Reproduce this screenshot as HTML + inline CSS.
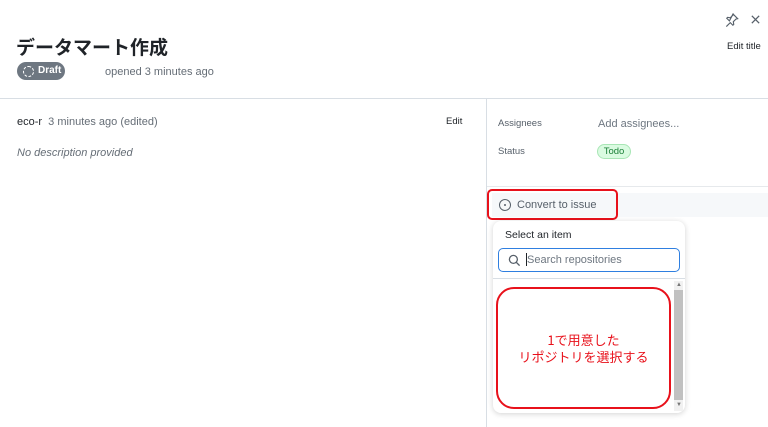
<!DOCTYPE html>
<html><head><meta charset="utf-8"><style>
*{box-sizing:border-box;margin:0;padding:0}
body{width:768px;height:427px;overflow:hidden;background:#fff;font-family:"Liberation Sans","Noto Sans CJK JP",sans-serif;color:#1f2328;position:relative}
.a{position:absolute;white-space:nowrap}
</style></head><body>
<div class="a" style="left:16px;top:33px;font-size:19px;font-weight:bold;font-family:'Noto Sans CJK JP',sans-serif">データマート作成</div>
<div class="a" style="left:17px;top:62px;width:48px;height:18px;border-radius:9px;background:#6e7781;color:#fff;font-size:10px;font-weight:bold;line-height:18px;padding-left:21px">Draft</div>
<div class="a" style="left:23px;top:66px;width:11px;height:11px;border:1.5px dashed #fff;border-radius:50%"></div>
<div class="a" style="left:105px;top:66px;font-size:11px;color:#656d76">opened 3 minutes ago</div>
<svg class="a" style="left:725px;top:13px" width="14" height="14" viewBox="0 0 16 16" fill="none" stroke="#57606a" stroke-width="1.3"><path d="M9.5 1.5l5 5-2 .5-3 3 .5 3-1 1-3-3-4.5 4.5M5 9L2 6l1-1 3 .5 3-3 .5-2z"/></svg>
<svg class="a" style="left:750px;top:14px" width="11" height="11" viewBox="0 0 12 12" stroke="#57606a" stroke-width="1.4"><path d="M2 2l8 8M10 2l-8 8"/></svg>
<div class="a" style="left:727px;top:41px;font-size:9.5px;color:#1f2328">Edit title</div>
<div class="a" style="left:0;top:98px;width:768px;height:1px;background:#d8dee4"></div>
<div class="a" style="left:486px;top:99px;width:1px;height:328px;background:#d8dee4"></div>
<div class="a" style="left:17px;top:116px;font-size:11px"><span>eco-r</span> <span style="color:#656d76">&nbsp;3 minutes ago (edited)</span></div>
<div class="a" style="left:446px;top:116px;font-size:9.5px">Edit</div>
<div class="a" style="left:17px;top:147px;font-size:11px;font-style:italic;color:#656d76">No description provided</div>
<div class="a" style="left:498px;top:118px;font-size:9.5px;color:#57606a">Assignees</div>
<div class="a" style="left:598px;top:118px;font-size:11px;color:#6e7781">Add assignees...</div>
<div class="a" style="left:498px;top:146px;font-size:9.5px;color:#57606a">Status</div>
<div class="a" style="left:597px;top:144px;width:34px;height:15px;border-radius:8px;background:#dafbe1;border:1px solid #a8e6b5;color:#1a7f37;font-size:9.5px;line-height:13px;text-align:center">Todo</div>
<div class="a" style="left:487px;top:186px;width:281px;height:1px;background:#e6e9ec"></div>
<div class="a" style="left:492px;top:193px;width:276px;height:24px;background:#f6f8fa"></div>
<div class="a" style="left:487px;top:189px;width:131px;height:31px;border:2.5px solid #e8111b;border-radius:5px"></div>
<div class="a" style="left:499px;top:199px;width:12px;height:12px;border:1.3px solid #57606a;border-radius:50%"></div>
<div class="a" style="left:504px;top:204px;width:2px;height:2px;background:#57606a;border-radius:50%"></div>
<div class="a" style="left:517px;top:199px;font-size:11px;color:#57606a">Convert to issue</div>
<div class="a" style="left:493px;top:221px;width:192px;height:192px;border-radius:8px;background:#fff;box-shadow:0 1px 6px rgba(0,0,0,.18)"></div>
<div class="a" style="left:505px;top:229px;font-size:10.5px;color:#1f2328">Select an item</div>
<div class="a" style="left:498px;top:248px;width:182px;height:24px;border:1.5px solid #2f7fe0;border-radius:5px"></div>
<svg class="a" style="left:508px;top:254px" width="13" height="13" viewBox="0 0 14 14" fill="none" stroke="#57606a" stroke-width="1.4"><circle cx="5.8" cy="5.8" r="4.3"/><path d="M9 9l3.5 3.5"/></svg>
<div class="a" style="left:526px;top:253px;width:1px;height:13px;background:#1f2328"></div>
<div class="a" style="left:527px;top:254px;font-size:11px;color:#6e7781">Search repositories</div>
<div class="a" style="left:493px;top:278px;width:192px;height:1px;background:#d8dee4"></div>
<div class="a" style="left:674px;top:281px;width:9px;height:130px;background:#f1f1f1"></div>
<div class="a" style="left:674px;top:290px;width:9px;height:110px;background:#c1c1c1"></div>
<div class="a" style="left:676px;top:282px;font-size:6px;color:#777">▲</div>
<div class="a" style="left:676px;top:402px;font-size:6px;color:#777">▼</div>
<div class="a" style="left:496px;top:287px;width:175px;height:122px;border:2.5px solid #e8111b;border-radius:18px"></div>
<div class="a" style="left:496px;top:331px;width:175px;text-align:center;font-size:13px;line-height:17px;color:#e8111b;font-family:'Noto Sans CJK JP',sans-serif">1で用意した<br>リポジトリを選択する</div>
</body></html>
